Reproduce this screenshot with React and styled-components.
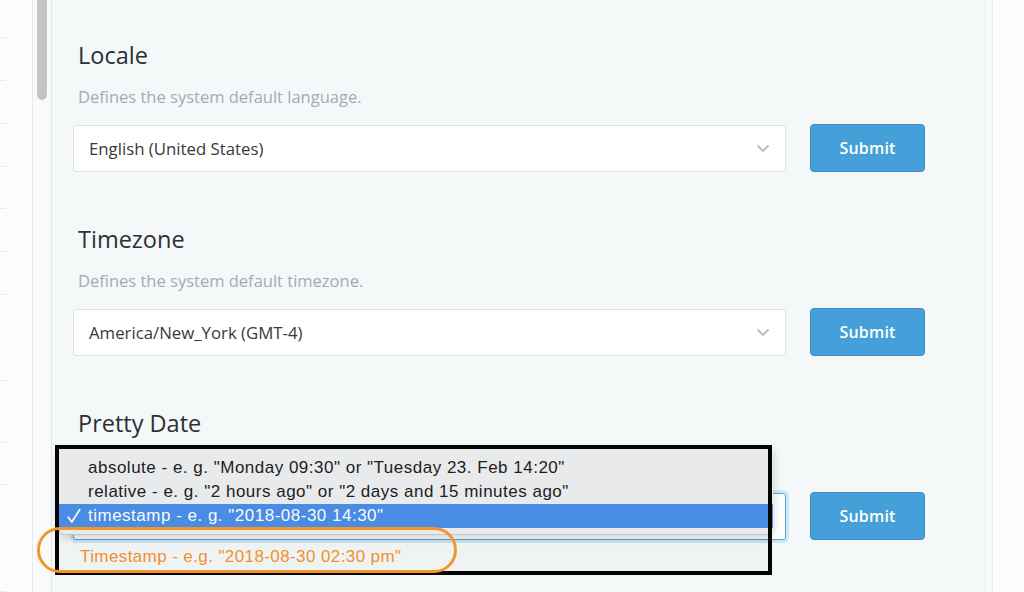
import React from "react";
import styled, { createGlobalStyle } from "styled-components";

const Global = createGlobalStyle`
  html, body { margin: 0; padding: 0; }
  body {
    width: 1024px;
    height: 592px;
    overflow: hidden;
    background: #fdfdfd;
    font-family: "Open Sans", "Noto Sans", sans-serif;
  }
`;

const Page = styled.div`
  position: relative;
  display: flex;
  width: 1024px;
  height: 592px;
  overflow: hidden;
  background: #fdfdfd;
`;

const Sidebar = styled.div`
  width: 32px;
  flex: none;
  display: flex;
  flex-direction: column;
  background: #fdfdfd;
`;

const SideRow = styled.div`
  height: ${(p) => p.$h}px;
  flex: none;
  margin-right: 26px;
  border-bottom: 1px solid #e9ebec;
  box-sizing: border-box;
`;

const ScrollTrack = styled.div`
  width: 20px;
  flex: none;
  background: #f9fafb;
  border-left: 1px solid #e6e8ea;
  border-right: 1px solid #e6e8ea;
  box-sizing: border-box;
  padding: 0 4px 0 4px;
`;

const Thumb = styled.div`
  height: 110px;
  margin-top: -10px;
  background: #c1c3c5;
  border-radius: 6px;
`;

const Content = styled.main`
  width: 933px;
  flex: none;
  background: #f5f8f9;
  box-sizing: border-box;
  padding: 38px 0 0 21px;
  display: flex;
  flex-direction: column;
`;

const RightEdge = styled.div`
  width: 8px;
  flex: none;
  background: #f7f9fa;
  border-left: 1px solid #eef1f3;
  border-right: 1px solid #eceef0;
  box-sizing: border-box;
`;

const Section = styled.section`
  height: 184px;
  flex: none;
  display: flex;
  flex-direction: column;
`;

const Heading = styled.h2`
  margin: 0 0 0 5px;
  font-family: "Open Sans", "Noto Sans", sans-serif;
  font-weight: 400;
  font-size: 23.5px;
  line-height: 34px;
  color: #2c3034;
`;

const Description = styled.p`
  margin: 15px 0 0 5px;
  font-size: 16.5px;
  line-height: 20px;
  color: #a0acb5;
`;

const Row = styled.div`
  display: flex;
  align-items: center;
  gap: 24px;
  margin-top: 17px;
`;

const SelectBox = styled.div`
  position: relative;
  width: 713px;
  height: 47px;
  box-sizing: border-box;
  background: #ffffff;
  border: 1px solid ${(p) => (p.$focused ? "#51a7e0" : "#dfe3e6")};
  box-shadow: ${(p) => (p.$focused ? "0 0 0 3px rgba(81,167,224,0.22)" : "none")};
  border-radius: 3px;
  display: flex;
  align-items: center;
  padding: 0 15px;
  font-size: 16.8px;
  color: #38393b;
`;

const SelectValue = styled.span`
  flex: 1;
`;

const Chevron = styled.svg`
  width: 14px;
  height: 9px;
  flex: none;
`;

const SubmitButton = styled.button`
  width: 115px;
  height: 48px;
  box-sizing: border-box;
  background: #45a0d9;
  border: 1px solid #3a8bc3;
  border-radius: 4px;
  color: #ffffff;
  font-family: "Open Sans", "Noto Sans", sans-serif;
  font-size: 16px;
  font-weight: 600;
  letter-spacing: 0.2px;
  padding: 0;
`;

/* annotation overlay */
const AnnotationFrame = styled.div`
  position: absolute;
  left: 55px;
  top: 445px;
  width: 717px;
  height: 130px;
  box-sizing: border-box;
  border: 4.5px solid #050505;
  background: rgba(0, 0, 0, 0.018);
  z-index: 3;
  pointer-events: none;
`;

const Menu = styled.ul`
  position: absolute;
  left: 59px;
  top: 448px;
  width: 714px;
  margin: 0;
  padding: 8px 0 6px 0;
  list-style: none;
  background: #eeeff0;
  border-radius: 0 0 5px 5px;
  box-shadow: 0 1px 0 #c9c9c9, 0 3px 10px rgba(0, 0, 0, 0.18);
  z-index: 2;
  font-family: "Liberation Sans", Arial, sans-serif;
  font-size: 17px;
  letter-spacing: 0.5px;
`;

const MenuItem = styled.li`
  position: relative;
  height: 24px;
  line-height: 24px;
  padding-left: 29px;
  color: ${(p) => (p.$selected ? "#ffffff" : "#1e1e1e")};
  background: ${(p) => (p.$selected ? "#4a90e8" : "transparent")};
  white-space: nowrap;
`;

const Check = styled.svg`
  position: absolute;
  left: 8px;
  top: 4px;
  width: 14px;
  height: 16px;
`;

const OrangeNote = styled.div`
  position: absolute;
  left: 80px;
  top: 547px;
  font-family: "Liberation Sans", Arial, sans-serif;
  font-size: 17px;
  letter-spacing: 0.4px;
  line-height: 20px;
  color: #f0912a;
  z-index: 4;
  white-space: nowrap;
`;

const OrangeRing = styled.div`
  position: absolute;
  left: 37px;
  top: 527px;
  width: 420px;
  height: 46px;
  box-sizing: border-box;
  border: 3.5px solid #f4952c;
  border-radius: 23px;
  z-index: 5;
  pointer-events: none;
`;

const sideRows = [38, 43, 43, 43, 42, 43, 43, 86, 62, 42, 107];

const sections = [
  {
    title: "Locale",
    desc: "Defines the system default language.",
    value: "English (United States)",
  },
  {
    title: "Timezone",
    desc: "Defines the system default timezone.",
    value: "America/New_York (GMT-4)",
  },
  {
    title: "Pretty Date",
    desc: "",
    value: "",
    focused: true,
  },
];

export default function App() {
  return (
    <>
      <Global />
      <Page>
        <Sidebar>
          {sideRows.map((h, i) => (
            <SideRow key={i} $h={h} />
          ))}
        </Sidebar>
        <ScrollTrack>
          <Thumb />
        </ScrollTrack>
        <Content>
          {sections.map((s) => (
            <Section key={s.title}>
              <Heading>{s.title}</Heading>
              <Description>{s.desc || "\u00a0"}</Description>
              <Row>
                <SelectBox $focused={s.focused}>
                  <SelectValue>{s.value}</SelectValue>
                  {!s.focused && (
                    <Chevron viewBox="0 0 14 9">
                      <path
                        d="M1.5 1.5 L7 7 L12.5 1.5"
                        fill="none"
                        stroke="#b9bdc0"
                        strokeWidth="1.8"
                      />
                    </Chevron>
                  )}
                </SelectBox>
                <SubmitButton>Submit</SubmitButton>
              </Row>
            </Section>
          ))}
        </Content>
        <RightEdge />

        <Menu>
          <MenuItem>absolute - e. g. "Monday 09:30" or "Tuesday 23. Feb 14:20"</MenuItem>
          <MenuItem>relative - e. g. "2 hours ago" or "2 days and 15 minutes ago"</MenuItem>
          <MenuItem $selected>
            <Check viewBox="0 0 14 16">
              <path
                d="M1.2 9.2 L4.8 14 L12.8 1.5"
                fill="none"
                stroke="#ffffff"
                strokeWidth="1.7"
                strokeLinecap="round"
                strokeLinejoin="round"
              />
            </Check>
            timestamp - e. g. "2018-08-30 14:30"
          </MenuItem>
        </Menu>
        <AnnotationFrame />
        <OrangeNote>Timestamp - e.g. "2018-08-30 02:30 pm"</OrangeNote>
        <OrangeRing />
      </Page>
    </>
  );
}
